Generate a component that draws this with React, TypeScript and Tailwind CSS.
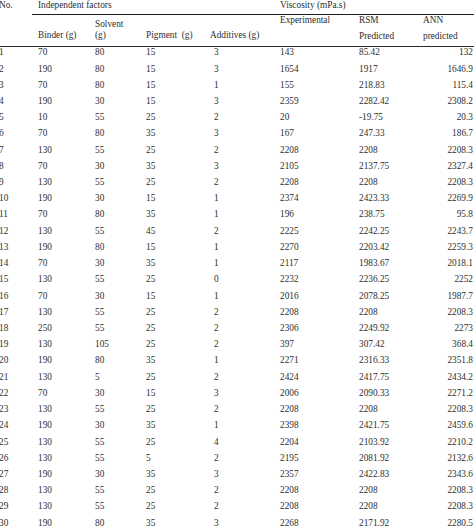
import React from "react";

const rows: string[][] = [
  ["1", "70", "80", "15", "3", "143", "85.42", "132"],
  ["2", "190", "80", "15", "3", "1654", "1917", "1646.9"],
  ["3", "70", "80", "15", "1", "155", "218.83", "115.4"],
  ["4", "190", "30", "15", "3", "2359", "2282.42", "2308.2"],
  ["5", "10", "55", "25", "2", "20", "-19.75", "20.3"],
  ["6", "70", "80", "35", "3", "167", "247.33", "186.7"],
  ["7", "130", "55", "25", "2", "2208", "2208", "2208.3"],
  ["8", "70", "30", "35", "3", "2105", "2137.75", "2327.4"],
  ["9", "130", "55", "25", "2", "2208", "2208", "2208.3"],
  ["10", "190", "30", "15", "1", "2374", "2423.33", "2269.9"],
  ["11", "70", "80", "35", "1", "196", "238.75", "95.8"],
  ["12", "130", "55", "45", "2", "2225", "2242.25", "2243.7"],
  ["13", "190", "80", "15", "1", "2270", "2203.42", "2259.3"],
  ["14", "70", "30", "35", "1", "2117", "1983.67", "2018.1"],
  ["15", "130", "55", "25", "0", "2232", "2236.25", "2252"],
  ["16", "70", "30", "15", "1", "2016", "2078.25", "1987.7"],
  ["17", "130", "55", "25", "2", "2208", "2208", "2208.3"],
  ["18", "250", "55", "25", "2", "2306", "2249.92", "2273"],
  ["19", "130", "105", "25", "2", "397", "307.42", "368.4"],
  ["20", "190", "80", "35", "1", "2271", "2316.33", "2351.8"],
  ["21", "130", "5", "25", "2", "2424", "2417.75", "2434.2"],
  ["22", "70", "30", "15", "3", "2006", "2090.33", "2271.2"],
  ["23", "130", "55", "25", "2", "2208", "2208", "2208.3"],
  ["24", "190", "30", "35", "1", "2398", "2421.75", "2459.6"],
  ["25", "130", "55", "25", "4", "2204", "2103.92", "2210.2"],
  ["26", "130", "55", "5", "2", "2195", "2081.92", "2132.6"],
  ["27", "190", "30", "35", "3", "2357", "2422.83", "2343.6"],
  ["28", "130", "55", "25", "2", "2208", "2208", "2208.3"],
  ["29", "130", "55", "25", "2", "2208", "2208", "2208.3"],
  ["30", "190", "80", "35", "3", "2268", "2171.92", "2280.5"],
];

const cols = "grid grid-cols-[38px_57px_51px_64px_70px_79px_64px_51px]";

export default function App() {
  return (
    <div
      className="w-[474px] h-[529px] overflow-hidden bg-white text-[#2e2e2e] text-[9.3px] leading-[11px]"
      style={{ fontFamily: '"Liberation Serif", "Times New Roman", serif' }}
    >
      {/* header row A */}
      <div className={`${cols} h-[14px]`}>
        <div className="-ml-[1px]">No.</div>
        <div className="col-span-4">Independent factors</div>
        <div className="col-span-3">Viscosity (mPa.s)</div>
      </div>
      <div className="flex h-[1.3px]">
        <div className="w-[32px]" />
        <div className="flex-1 bg-[#1e1e1e]" />
      </div>
      {/* header row B */}
      <div className={`${cols} h-[31px]`}>
        <div />
        <div className="pt-[15px]">Binder (g)</div>
        <div className="pt-[4px]">
          <div>Solvent</div>
          <div>(g)</div>
        </div>
        <div className="pt-[15px] whitespace-pre">Pigment  (g)</div>
        <div className="pt-[15px]">Additives (g)</div>
        <div>Experimental</div>
        <div>
          <div className="h-[16px]">RSM</div>
          <div>Predicted</div>
        </div>
        <div>
          <div className="h-[16px]">ANN</div>
          <div>predicted</div>
        </div>
      </div>
      <div className="h-[1px] bg-[#2a2a2a]" />
      {/* body */}
      <div className={`${cols} auto-rows-[16.23px]`}>
        {rows.map((r) => (
          <React.Fragment key={r[0]}>
            <div className="-ml-[1px]">{r[0]}</div>
            <div>{r[1]}</div>
            <div>{r[2]}</div>
            <div>{r[3]}</div>
            <div className="pl-[4px]">{r[4]}</div>
            <div>{r[5]}</div>
            <div>{r[6]}</div>
            <div className="text-right pr-[1px]">{r[7]}</div>
          </React.Fragment>
        ))}
      </div>
    </div>
  );
}
